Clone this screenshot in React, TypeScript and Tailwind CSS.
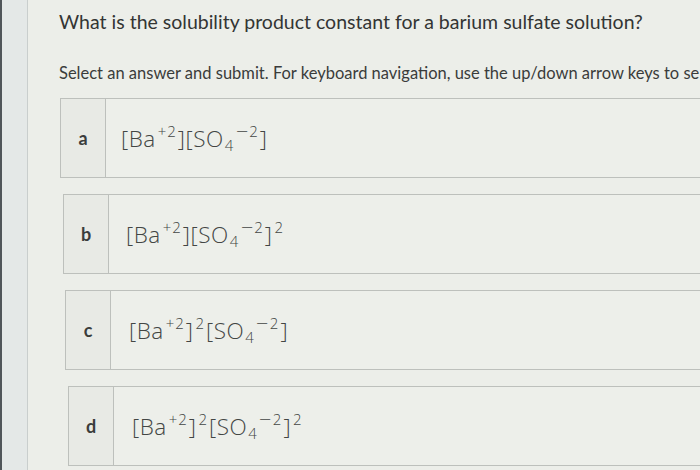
import React from 'react'

type Opt = { key: string; ba2: boolean; so2: boolean; shift: string; pad: string }

const options: Opt[] = [
  { key: 'a', ba2: false, so2: false, shift: 'ml-[1px]', pad: 'pl-[15px]' },
  { key: 'b', ba2: false, so2: true, shift: 'ml-[4px]', pad: 'pl-[17px]' },
  { key: 'c', ba2: true, so2: false, shift: 'ml-[6px]', pad: 'pl-[18px]' },
  { key: 'd', ba2: true, so2: true, shift: 'ml-[9px]', pad: 'pl-[18px]' },
]

const sup = 'text-[15px] -top-[10px] ml-[2px] mr-[1px] tracking-[1px]'

function Minus() {
  return <span className="inline-block scale-x-[1.45] mx-[2px]">−</span>
}

function Formula({ ba2, so2 }: { ba2: boolean; so2: boolean }) {
  return (
    <span className="mt-[2px] font-['Open_Sans',sans-serif] text-[22.5px] font-light tracking-[0.5px] text-[#434644]">
      [Ba<sup className={sup}>+2</sup>]{ba2 && <sup className={sup}>2</sup>}
      [SO<sub className="text-[15px] -bottom-[4px] pl-[1px]">4</sub>
      <sup className={sup}>
        <Minus />2
      </sup>
      ]{so2 && <sup className={sup}>2</sup>}
    </span>
  )
}

export default function App() {
  return (
    <div className="w-[700px] h-[470px] overflow-hidden flex bg-[#eceee9] font-['Lato',sans-serif]">
      <div className="w-[2px] bg-[#50565a]" />
      <div className="w-[26px] bg-[#e4e8e7] border-r border-[#c9cecd]" />
      <div className="flex-1 min-w-0 pl-[31px]">
        <h1 className="pt-[9px] text-[19.5px] leading-[26px] text-[#333534] whitespace-nowrap">
          What is the solubility product constant for a barium sulfate solution?
        </h1>
        <p className="mt-[27px] text-[16.5px] leading-[22px] text-[#3a3c3b] whitespace-nowrap">
          Select an answer and submit. For keyboard navigation, use the up/down arrow keys to se
        </p>
        <div className="mt-[14px] flex flex-col gap-[16px]">
          {options.map((o) => (
            <div
              key={o.key}
              className={`${o.shift} w-[700px] h-[80px] flex border border-[#bdc0bc] bg-[#edefea]`}
            >
              <div className="w-[45px] shrink-0 flex items-center justify-center border-r border-[#bdc0bc] bg-[#e8eae5] text-[18px] font-bold text-[#3b3d3c]">
                {o.key}
              </div>
              <div className={`flex items-center ${o.pad}`}>
                <Formula ba2={o.ba2} so2={o.so2} />
              </div>
            </div>
          ))}
        </div>
      </div>
    </div>
  )
}
